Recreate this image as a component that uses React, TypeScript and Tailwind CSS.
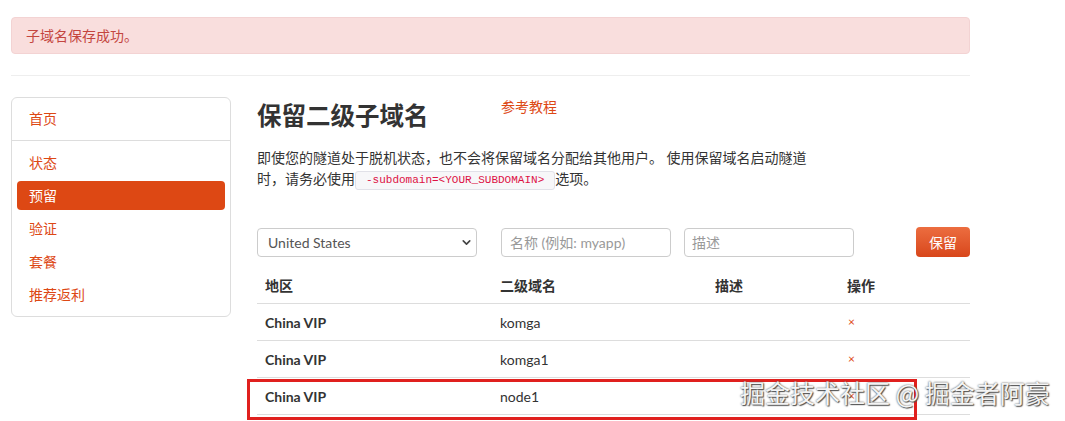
import { ChevronDown } from "lucide-react";

const navItems = ["状态", "预留", "验证", "套餐", "推荐返利"];

const rows = [
    { region: "China VIP", name: "komga", desc: "" },
    { region: "China VIP", name: "komga1", desc: "" },
    { region: "China VIP", name: "node1", desc: "" },
];

export default function App() {
    return (
        <div className="relative w-[1065px] h-[421px] overflow-hidden bg-white text-[14px] text-[#333] font-['Lato','Noto_Sans_CJK_SC',sans-serif]">
            <div className="ml-[11px] w-[959px] pt-[17px]">
                <div className="h-[37px] flex items-center px-[14px] rounded-[4px] border border-[#f3d3d3] bg-[#f9dedd] text-[#c4463f]">
                    子域名保存成功。
                </div>
                <div className="mt-[21px] h-px bg-[#eee]" />

                <div className="mt-[21px] flex gap-[26px]">
                    {/* sidebar */}
                    <div className="w-[220px] shrink-0 self-start rounded-[6px] border border-[#ddd] px-[5px] pt-[6px] pb-[7px]">
                        <div className="h-[29px] flex items-center pl-[12px] text-[#dd4814]">首页</div>
                        <div className="-mx-[5px] my-[7px] h-px bg-[#ddd]" />
                        <div className="flex flex-col gap-[4px]">
                            {navItems.map((item) => (
                                <div
                                    key={item}
                                    className={
                                        item === "预留"
                                            ? "h-[29px] flex items-center pl-[12px] rounded-[4px] bg-[#dd4814] text-white"
                                            : "h-[29px] flex items-center pl-[12px] text-[#dd4814]"
                                    }
                                >
                                    {item}
                                </div>
                            ))}
                        </div>
                    </div>

                    {/* main */}
                    <div className="w-[713px]">
                        <div className="flex items-start">
                            <h2 className="w-[244px] pt-[1px] text-[24.5px] leading-[36px] font-bold text-[#333]">保留二级子域名</h2>
                            <a className="leading-[20px] text-[#dd4814]">参考教程</a>
                        </div>

                        <p className="mt-[13px] w-[556px] leading-[21px]">
                            即使您的隧道处于脱机状态，也不会将保留域名分配给其他用户。 使用保留域名启动隧道时，请务必使用
                            <code className="inline-block h-[19px] align-middle px-[10px] leading-[17px] rounded-[3px] border border-[#e1e1e8] bg-[#f7f7f9] text-[11px] text-[#d14] font-['Liberation_Mono',monospace]">
                                -subdomain=&lt;YOUR_SUBDOMAIN&gt;
                            </code>
                            选项。
                        </p>

                        <div className="mt-[38px] flex items-center h-[29px]">
                            <div className="relative w-[220px] h-[29px]">
                                <select className="w-full h-full appearance-none rounded-[4px] border border-[#ccc] bg-white pl-[10px] text-[14px] text-[#555]">
                                    <option>United States</option>
                                </select>
                                <ChevronDown size={13} strokeWidth={3} className="absolute right-[4px] top-[8px] text-[#444] pointer-events-none" />
                            </div>
                            <input
                                className="ml-[24px] w-[170px] h-[29px] rounded-[4px] border border-[#ccc] pl-[8px] text-[14px] placeholder:text-[#999]"
                                placeholder="名称 (例如: myapp)"
                            />
                            <input
                                className="ml-[13px] w-[170px] h-[29px] rounded-[4px] border border-[#ccc] pl-[7px] text-[14px] placeholder:text-[#999]"
                                placeholder="描述"
                            />
                            <button className="ml-auto w-[54px] h-[30px] rounded-[4px] bg-gradient-to-b from-[#ec6d3f] to-[#d8461a] text-white text-[14px]">
                                保留
                            </button>
                        </div>

                        <table className="mt-[10px] w-full border-collapse">
                            <thead>
                                <tr className="h-[37px] border-b border-[#ddd] text-left font-bold">
                                    <th className="w-[235px] pl-[8px]">地区</th>
                                    <th className="w-[215px] pl-[8px]">二级域名</th>
                                    <th className="w-[132px] pl-[8px]">描述</th>
                                    <th className="pl-[8px]">操作</th>
                                </tr>
                            </thead>
                            <tbody>
                                {rows.map((r) => (
                                    <tr key={r.name} className="h-[37px] border-b border-[#ddd]">
                                        <td className="pl-[8px] font-bold">{r.region}</td>
                                        <td className="pl-[8px]">{r.name}</td>
                                        <td className="pl-[8px]">{r.desc}</td>
                                        <td className="pl-[9px] text-[12px] text-[#dd4814]">×</td>
                                    </tr>
                                ))}
                            </tbody>
                        </table>
                    </div>
                </div>
            </div>

            {/* annotation overlay */}
            <div className="absolute left-[247px] top-[379px] w-[670px] h-[41px] border-[3px] border-[#e0201e]" />
            <div className="absolute left-[740px] top-[375px] text-[25px] leading-[34px] text-[#f4f4f4] font-['Noto_Sans_CJK_SC',sans-serif] [text-shadow:0_0_2px_#444,1px_1px_1px_#555]">
                掘金技术社区 @ 掘金者阿豪
            </div>
        </div>
    );
}
